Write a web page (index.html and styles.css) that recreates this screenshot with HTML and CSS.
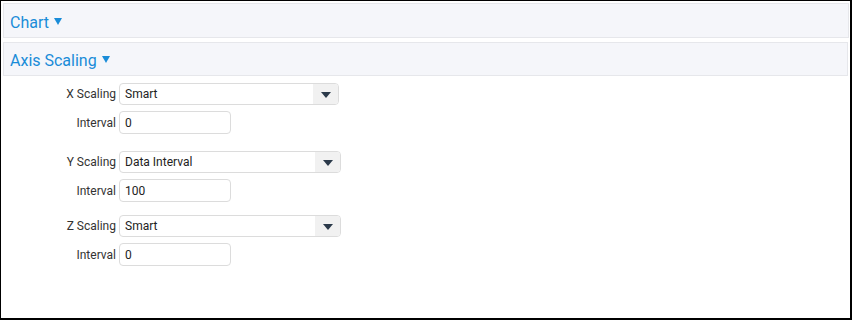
FILE: index.html
```html
<!DOCTYPE html>
<html lang="en">
<head>
    <meta charset="UTF-8">
    <title>Axis Scaling</title>
    <link rel="stylesheet" href="styles.css">
</head>
<body>
    <div class="frame">
        <div class="section-head">Chart<span class="caret"></span></div>
        <div class="section-head">Axis Scaling<span class="caret"></span></div>

        <div class="form">
            <div class="group">
                <label>X Scaling</label>
                <div class="dropdown"><span>Smart</span><span class="arrow"></span></div>
                <label>Interval</label>
                <div class="textbox">0</div>
            </div>
            <div class="group tight">
                <label>Y Scaling</label>
                <div class="dropdown wide"><span>Data Interval</span><span class="arrow"></span></div>
                <label>Interval</label>
                <div class="textbox">100</div>
            </div>
            <div class="group">
                <label>Z Scaling</label>
                <div class="dropdown wide"><span>Smart</span><span class="arrow"></span></div>
                <label>Interval</label>
                <div class="textbox">0</div>
            </div>
        </div>
    </div>
</body>
</html>
```

FILE: styles.css
```css
body {
    margin: 0;
    font-family: Roboto, "Liberation Sans", sans-serif;
    color: #333;
}
.frame {
    box-sizing: border-box;
    width: 852px;
    height: 320px;
    border-top: 1px solid #000;
    border-left: 1px solid #000;
    border-right: 2px solid #000;
    border-bottom: 2px solid #000;
    padding: 2px 1px 0 2px;
    background: #fff;
}
.section-head {
    box-sizing: border-box;
    height: 35px;
    margin-bottom: 4px;
    padding: 9px 6px 0;
    background-color: #f5f6fa;
    border: 1px solid #e6e7eb;
    color: #1a8cd8;
    font-size: 16px;
}
.section-head + .section-head {
    height: 34px;
    margin-right: 1px;
    padding-top: 8px;
}
.caret {
    display: inline-block;
    margin-left: 5px;
    vertical-align: 3px;
    border-left: 4.5px solid transparent;
    border-right: 4.5px solid transparent;
    border-top: 7px solid #1a8cd8;
}
.form {
    padding-top: 3px;
}
.group {
    display: grid;
    grid-template-columns: 113px auto;
    column-gap: 3px;
    row-gap: 6px;
    align-items: center;
    justify-items: start;
    margin-bottom: 17px;
}
.group.tight {
    margin-bottom: 13px;
}
.group label {
    justify-self: end;
    font-size: 12px;
    color: #333;
}
.dropdown {
    box-sizing: border-box;
    display: flex;
    justify-content: space-between;
    width: 220px;
    height: 22px;
    border: 1px solid #dcdcdc;
    border-radius: 4px;
    font-size: 12px;
    color: #222;
    overflow: hidden;
}
.dropdown.wide {
    width: 222px;
}
.dropdown span:first-child {
    padding: 3px 0 0 5px;
}
.arrow {
    width: 25px;
    background-color: #f1f1f1;
    position: relative;
}
.arrow::after {
    content: "";
    position: absolute;
    left: 8px;
    top: 8px;
    border-left: 5px solid transparent;
    border-right: 5px solid transparent;
    border-top: 6px solid #2b3a4a;
}
.textbox {
    box-sizing: border-box;
    width: 112px;
    height: 23px;
    padding: 4px 0 0 5px;
    border: 1px solid #dcdcdc;
    border-radius: 4px;
    font-size: 12px;
    color: #222;
}
```
